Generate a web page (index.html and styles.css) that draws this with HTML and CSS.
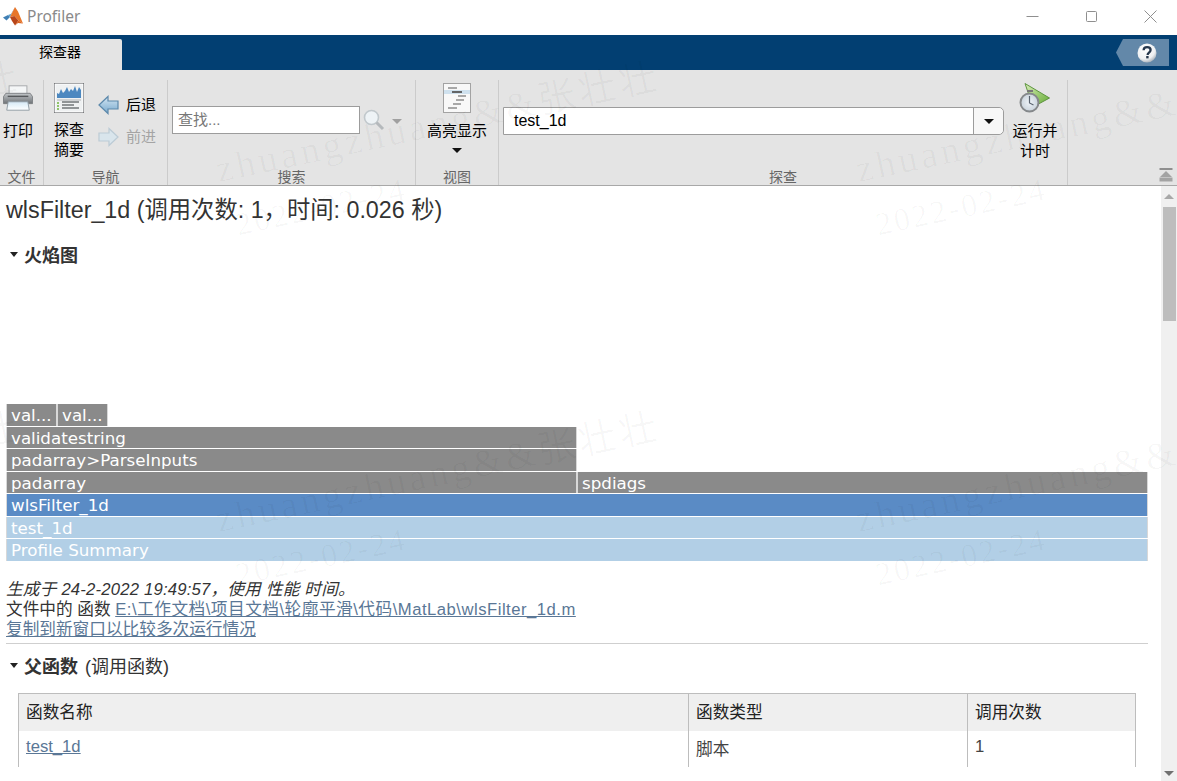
FILE: index.html
```html
<!DOCTYPE html>
<html lang="zh">
<head>
<meta charset="utf-8">
<title>Profiler</title>
<link rel="stylesheet" href="styles.css">
</head>
<body>
<div class="window">
  <header class="titlebar">
    <svg class="logo" width="20" height="20" viewBox="0 0 20 20">
      <polygon points="0,11.5 5,9 7,11 3.5,14.5" fill="#3f7fb5"/>
      <polygon points="5,9 8,8 12,1 7,11" fill="#5b9bc8"/>
      <polygon points="12,1 15,5.5 20,17.5 15.5,14.5 11.5,10 7,11 9.5,6" fill="#e8762a"/>
      <polygon points="7,11 11.5,10 15.5,14.5 12,19.5 9,15" fill="#b8461a"/>
      <polygon points="15.5,14.5 20,17.5 15,17 12,19.5" fill="#d9621f"/>
    </svg>
    <span class="app-name">Profiler</span>
    <div class="win-controls">
      <svg width="13" height="13" viewBox="0 0 13 13"><path d="M0.5 6.5H12.5" stroke="#8f8f8f" fill="none"/></svg>
      <svg width="13" height="13" viewBox="0 0 13 13"><rect x="1.5" y="1.5" width="10" height="10" rx="1" stroke="#8f8f8f" fill="none"/></svg>
      <svg width="13" height="13" viewBox="0 0 13 13"><path d="M0.5 0.5L12.5 12.5M12.5 0.5L0.5 12.5" stroke="#8f8f8f" fill="none"/></svg>
    </div>
  </header>

  <nav class="tabstrip">
    <div class="tab">探查器</div>
    <div class="help">
      <svg width="53" height="27" viewBox="0 0 53 27">
        <defs><radialGradient id="hg" cx="0.4" cy="0.3" r="0.8"><stop offset="0" stop-color="#fff"/><stop offset="0.65" stop-color="#eef0f2"/><stop offset="1" stop-color="#8d98a3"/></radialGradient></defs>
        <polygon points="7,0 53,0 53,27 7,27 0,13.5" fill="#6388a9"/>
        <circle cx="31" cy="14" r="9.5" fill="url(#hg)"/>
        <path d="M27.6 11.3c0-2 1.5-3.1 3.5-3.1s3.5 1.1 3.5 2.9c0 2.6-3 2.5-3 4.8" stroke="#27384d" stroke-width="2.3" fill="none"/>
        <rect x="30.2" y="17" width="2.4" height="2.4" fill="#27384d"/>
      </svg>
    </div>
  </nav>

  <section class="toolstrip">
    <div class="group g-file">
      <div class="group-body col-center">
        <svg class="ic-print" width="30" height="26" viewBox="0 0 32 27">
          <defs>
            <linearGradient id="pb" x1="0" y1="0" x2="0" y2="1"><stop offset="0" stop-color="#c2c6c9"/><stop offset="1" stop-color="#6e7276"/></linearGradient>
            <linearGradient id="pp" x1="0" y1="0" x2="0" y2="1"><stop offset="0" stop-color="#d5e9f6"/><stop offset="1" stop-color="#fff"/></linearGradient>
          </defs>
          <rect x="6.5" y="0.5" width="19" height="9" fill="#f4f6f7" stroke="#a5a8aa"/>
          <path d="M3 8.5H29L31.5 12V19.5H0.5V12Z" fill="url(#pb)" stroke="#7d8083"/>
          <rect x="5" y="11" width="22" height="1.5" fill="#55585b"/>
          <path d="M5.5 17.5H26.5L28 26.5H4Z" fill="url(#pp)" stroke="#8f9ba3"/>
        </svg>
        <span class="btn-text print-text">打印</span>
      </div>
      <div class="group-label">文件</div>
    </div>

    <div class="group g-nav">
      <div class="group-body nav-body">
        <div class="summary col-center">
          <svg width="30" height="30" viewBox="0 0 30 30">
            <rect x="0.5" y="0.5" width="29" height="29" fill="#eff1f2" stroke="#4c4f52"/>
            <rect x="1" y="1" width="28" height="28" fill="none" stroke="#fff"/>
            <path d="M3 15V10L5 11L7 6L9 10L11 8L13 4L15 9L17 6L19 8L21 3L23 9L25 4L27 7V15Z" fill="#4c88c0"/>
            <path d="M3 17H27" stroke="#b1b4b6"/>
            <path d="M8 19H25M8 22H20M8 25H25" stroke="#73777a" stroke-width="1.4"/>
            <path d="M4 19V27" stroke="#8fc46a" stroke-width="2" stroke-dasharray="2 1"/>
          </svg>
          <span class="btn-text summary-text">探查<br>摘要</span>
        </div>
        <div class="nav-arrows">
          <div class="nav-item">
            <svg width="21" height="20" viewBox="0 0 21 20">
              <defs><linearGradient id="ab" x1="0" y1="0" x2="0" y2="1"><stop offset="0" stop-color="#d4e6f3"/><stop offset="1" stop-color="#78a9cd"/></linearGradient></defs>
              <path d="M1 10L10 1.5V6H20V14H10V18.5Z" fill="url(#ab)" stroke="#5d89ab" stroke-width="1.2"/>
            </svg>
            <span class="btn-text">后退</span>
          </div>
          <div class="nav-item disabled">
            <svg width="21" height="20" viewBox="0 0 21 20">
              <path d="M20 10L11 1.5V6H1V14H11V18.5Z" fill="#d9e5ec" stroke="#bccbd5" stroke-width="1.2"/>
            </svg>
            <span class="btn-text">前进</span>
          </div>
        </div>
      </div>
      <div class="group-label">导航</div>
    </div>

    <div class="group g-search">
      <div class="group-body search-body">
        <div class="search-box">查找...</div>
        <svg class="ic-search" width="22" height="22" viewBox="0 0 22 22">
          <circle cx="8.5" cy="8.5" r="7" fill="#eef3f6" stroke="#c1c8cc" stroke-width="1.6"/>
          <path d="M13.5 13.5L20 20" stroke="#b5b9bc" stroke-width="3"/>
        </svg>
        <span class="caret caret-muted"></span>
      </div>
      <div class="group-label">搜索</div>
    </div>

    <div class="group g-view">
      <div class="group-body col-center">
        <svg class="ic-view" width="28" height="30" viewBox="0 0 28 30">
          <rect x="0.5" y="0.5" width="27" height="29" fill="#f8f8f8" stroke="#a3a3a3"/>
          <rect x="1" y="7" width="26" height="4" fill="#cfe1ee"/>
          <path d="M5 5H14M9 9H19M15 13H23M13 17H21M10 21H18M5 25H14" stroke="#8d8d8d" stroke-width="1.3"/>
          <path d="M9 9H19" stroke="#444" stroke-width="1.3"/>
        </svg>
        <span class="btn-text view-text">高亮显示</span>
        <span class="caret view-caret"></span>
      </div>
      <div class="group-label">视图</div>
    </div>

    <div class="group g-explore">
      <div class="group-body explore-body">
        <div class="combo">
          <div class="combo-value">test_1d</div>
          <div class="combo-btn"><span class="caret"></span></div>
        </div>
        <div class="run col-center">
          <svg width="32" height="31" viewBox="0 0 32 31">
            <defs>
              <linearGradient id="rg" x1="0" y1="0" x2="1" y2="1"><stop offset="0" stop-color="#d8eeb8"/><stop offset="1" stop-color="#5fa82e"/></linearGradient>
              <radialGradient id="rc" cx="0.5" cy="0.5" r="0.6"><stop offset="0" stop-color="#eef3f8"/><stop offset="1" stop-color="#c2ccd6"/></radialGradient>
            </defs>
            <path d="M6 0.5L30.5 15L14 24Z" fill="url(#rg)" stroke="#5e9440"/>
            <rect x="8" y="7" width="6" height="2" fill="#777"/>
            <circle cx="10.5" cy="19.5" r="9" fill="url(#rc)" stroke="#85888b" stroke-width="2"/>
            <path d="M10.5 13V20L14.5 22" stroke="#5a6470" stroke-width="1.2" fill="none"/>
          </svg>
          <span class="btn-text run-text">运行并<br>计时</span>
        </div>
      </div>
      <div class="group-label">探查</div>
    </div>

    <div class="strip-end">
      <svg width="14" height="14" viewBox="0 0 14 14">
        <rect x="0.5" y="0" width="13" height="2" fill="#8f8f8f"/>
        <polygon points="7,3 13,9 1,9" fill="#a3a3a3"/>
        <rect x="0.5" y="9.5" width="13" height="4" fill="#a3a3a3"/>
      </svg>
    </div>
  </section>

  <main class="main">
    <div class="content">
      <h1 class="page-title">wlsFilter_1d (调用次数: 1，时间: 0.026 秒)</h1>
      <h2 class="section-head flame-head"><span class="tri"></span>火焰图</h2>

      <div class="flame">
        <div class="frow">
          <div class="fbar grey f-small">val...</div>
          <div class="fbar grey f-small">val...</div>
        </div>
        <div class="frow">
          <div class="fbar grey f-half">validatestring</div>
        </div>
        <div class="frow">
          <div class="fbar grey f-half">padarray&gt;ParseInputs</div>
        </div>
        <div class="frow">
          <div class="fbar grey f-half">padarray</div>
          <div class="fbar grey f-half">spdiags</div>
        </div>
        <div class="frow">
          <div class="fbar blue f-full">wlsFilter_1d</div>
        </div>
        <div class="frow">
          <div class="fbar pale f-full">test_1d</div>
        </div>
        <div class="frow">
          <div class="fbar pale f-full">Profile Summary</div>
        </div>
      </div>

      <div class="meta">
        <div class="meta-line"><em class="stamp">生成于 24-2-2022 19:49:57，使用 性能 时间。</em></div>
        <div class="meta-line">文件中的 函数 <a class="link path-link" href="#">E:\工作文档\项目文档\轮廓平滑\代码\MatLab\wlsFilter_1d.m</a></div>
        <div class="meta-line"><a class="link" href="#">复制到新窗口以比较多次运行情况</a></div>
      </div>
      <hr class="rule">
      <h2 class="section-head parent-head"><span class="tri"></span>父函数 <span class="sub">(调用函数)</span></h2>

      <div class="table">
        <div class="th c1">函数名称</div>
        <div class="th c2">函数类型</div>
        <div class="th c3">调用次数</div>
        <div class="td c1"><a class="link" href="#">test_1d</a></div>
        <div class="td c2 type-cell">脚本</div>
        <div class="td c3">1</div>
      </div>
    </div>
    <div class="scrollbar">
      <span class="sb-arrow up"></span>
      <div class="sb-track"><div class="sb-thumb"></div></div>
      <span class="sb-arrow down"></span>
    </div>
  </main>

  <div class="watermarks" aria-hidden="true">
    <div class="wm-tile"><div class="wm"><span>zhuangzhuang&amp;&amp;张壮壮</span><span class="wm-date">2022-02-24</span></div></div>
    <div class="wm-tile"><div class="wm"><span>zhuangzhuang&amp;&amp;张壮壮</span><span class="wm-date">2022-02-24</span></div></div>
    <div class="wm-tile"><div class="wm"><span>zhuangzhuang&amp;&amp;张壮壮</span><span class="wm-date">2022-02-24</span></div></div>
    <div class="wm-tile"><div class="wm"><span>zhuangzhuang&amp;&amp;张壮壮</span><span class="wm-date">2022-02-24</span></div></div>
    <div class="wm-tile"><div class="wm"><span>zhuangzhuang&amp;&amp;张壮壮</span><span class="wm-date">2022-02-24</span></div></div>
    <div class="wm-tile"><div class="wm"><span>zhuangzhuang&amp;&amp;张壮壮</span><span class="wm-date">2022-02-24</span></div></div>
  </div>
</div>
</body>
</html>
```

FILE: styles.css
```css
* { box-sizing: border-box; }
html, body { margin: 0; padding: 0; height: 100%; overflow: hidden; background: #fff; }
body { font-family: "Liberation Sans", "Noto Sans CJK SC", sans-serif; color: #333; }

.window { position: relative; width: 1177px; height: 781px; display: flex; flex-direction: column; overflow: hidden; }

/* title bar */
.titlebar { height: 35px; flex: none; display: flex; align-items: center; padding: 0 0 3px 3px; background: #fff; }
.logo { margin-right: 4px; }
.app-name { font-family: "Noto Sans", sans-serif; font-size: 15.5px; color: #8a8a8a; }
.win-controls { margin-left: auto; display: flex; gap: 46px; padding-right: 20px; }

/* tabs */
.tabstrip { height: 35px; flex: none; background: #023f72; display: flex; align-items: flex-end; }
.tab { width: 122px; height: 31px; background: #e4e4e4; border-top-right-radius: 2px; font-size: 14px; line-height: 27px; text-align: center; color: #000; padding-right: 2px; }
.help { margin-left: auto; margin-right: 8px; margin-bottom: 4px; height: 27px; }
.help svg { display: block; }

/* toolstrip */
.toolstrip { height: 116px; flex: none; background: #e4e4e4; border-bottom: 1px solid #a8a8a8; display: flex; padding-top: 10px; }
.group { flex: none; display: flex; flex-direction: column; border-right: 1px solid #cbcbcb; }
.group-body { flex: 1; min-height: 0; }
.group-label { height: 17px; font-size: 14px; line-height: 18px; text-align: center; color: #666; }
.col-center { display: flex; flex-direction: column; align-items: center; }
.btn-text { font-size: 15px; line-height: 20px; color: #000; text-align: center; }
.g-file { width: 44px; }
.g-nav { width: 124px; }
.g-search { width: 248px; }
.g-view { width: 83px; }
.g-explore { width: 569px; }
.ic-print { margin-top: 5px; }
.print-text { margin-top: 10px; }
.g-file .group-body { padding-right: 7px; }

.nav-body { display: flex; padding: 3px 0 0 10px; }
.summary { width: 30px; }
.summary-text { margin-top: 7px; }
.nav-arrows { margin-left: 14px; padding-top: 12px; display: flex; flex-direction: column; gap: 12px; }
.nav-item { display: flex; align-items: center; gap: 7px; height: 20px; }
.nav-item.disabled .btn-text { color: #a4a4a4; }

.search-body { display: flex; align-items: flex-start; padding: 26px 0 0 4px; }
.search-box { width: 188px; height: 28px; background: #fff; border: 1px solid #9c9c9c; font-size: 15px; line-height: 26px; padding-left: 5px; color: #777; }
.ic-search { margin: 3px 0 0 3px; }
.caret { display: inline-block; width: 0; height: 0; border-left: 5px solid transparent; border-right: 5px solid transparent; border-top: 5px solid #111; }
.caret-muted { border-top-color: #a0a0a0; margin: 13px 0 0 7px; }

.ic-view { margin-top: 3px; }
.view-text { margin-top: 8px; }
.view-caret { margin-top: 7px; }

.explore-body { display: flex; padding: 3px 0 0 4px; }
.combo { width: 501px; height: 28px; margin-top: 24px; display: flex; background: #fff; border: 1px solid #9c9c9c; border-radius: 0 5px 5px 0; }
.combo-value { flex: 1; font-size: 16px; line-height: 25px; padding-left: 10px; color: #000; }
.combo-btn { width: 30px; border-left: 1px solid #9c9c9c; background: #f7f7f7; border-radius: 0 5px 5px 0; display: flex; align-items: center; justify-content: center; }
.run { width: 62px; margin-left: 0; }
.run-text { margin-top: 7px; }

.strip-end { flex: 1; display: flex; justify-content: flex-end; align-items: flex-end; padding: 0 4px 3px 0; }
.strip-end svg { display: block; }

/* main */
.main { flex: 1; min-height: 0; display: flex; background: #fff; }
.content { flex: 1; min-width: 0; padding: 0 13px 0 5px; overflow: hidden; }
.page-title { margin: 11px 0 0 1px; font-size: 23.3px; font-weight: 400; line-height: 26px; color: #333; white-space: nowrap; }
.section-head { margin: 0; font-size: 18px; line-height: 24px; font-weight: 700; color: #333; display: flex; align-items: center; white-space: pre; }
.flame-head { margin-top: 21px; }
.tri { width: 0; height: 0; margin: 0 6px 3px 5px; border-left: 4.5px solid transparent; border-right: 4.5px solid transparent; border-top: 5px solid #222; }
.sub { font-weight: 400; margin-left: 2px; }

.flame { margin-top: 136px; margin-left: 1px; width: 1142px; display: flex; flex-direction: column; gap: 1px; }
.frow { height: 21.5px; display: flex; }
.fbar { height: 100%; font-family: "DejaVu Sans", sans-serif; font-size: 16.7px; line-height: 22px; color: #fff; padding-left: 4px; white-space: nowrap; overflow: hidden; border: 1px solid #d8d8d8; border-width: 0 1px; }
.grey { background: #8a8a8a; }
.blue { background: #5a8bc5; }
.pale { background: #b2cfe6; }
.f-small { width: 51px; }
.f-half { width: 571px; }
.f-full { width: 1142px; }

.meta { margin-top: 19px; margin-left: 1px; font-size: 16.67px; line-height: 20px; color: #333; }
.meta-line { white-space: nowrap; }
.stamp { letter-spacing: 0.2px; }
.link { color: #5a7796; text-decoration: underline; }
.path-link { letter-spacing: 0.5px; }
.rule { margin: 3px 0 0 1px; width: 1142px; border: 0; border-top: 1px solid #cfcfcf; }
.parent-head { margin-top: 11px; }

.table { margin: 14px 0 0 13px; width: 1118px; display: grid; grid-template-columns: 669px 279px 168px; grid-template-rows: 37px 36px; border: 1px solid #bdbdbd; border-width: 1px 1px 0; font-size: 16.67px; }
.th { background: #efefef; color: #222; line-height: 37px; padding-left: 7px; }
.td { padding: 6px 0 0 7px; line-height: 20px; color: #444; }
.c2, .c3 { border-left: 1px solid #bdbdbd; }
.type-cell { padding-top: 9px; }

.scrollbar { width: 16px; flex: none; background: #f0f0f0; display: flex; flex-direction: column; align-items: center; }
.sb-arrow { flex: none; width: 0; height: 0; border-left: 5px solid transparent; border-right: 5px solid transparent; }
.sb-arrow.up { margin-top: 8px; border-bottom: 5px solid #a8a8a8; }
.sb-arrow.down { margin-bottom: 5px; border-top: 5px solid #707070; }
.sb-track { flex: 1; width: 100%; padding: 8px 1px 0 2px; }
.sb-thumb { height: 114px; background: #bdbdbd; }

/* watermark overlay */
.watermarks { position: absolute; left: -420px; top: 70px; display: grid; grid-template-columns: repeat(3, 640px); grid-auto-rows: 350px; pointer-events: none; }
.wm-tile { position: relative; }
.wm { position: absolute; left: 2px; top: 78px; width: 460px; transform: rotate(-12deg); transform-origin: left center; display: flex; flex-direction: column; font-family: "Liberation Serif", "Noto Sans CJK SC", serif; font-size: 38px; line-height: 42px; color: rgba(0, 0, 0, 0.03); white-space: nowrap; letter-spacing: 3.6px; }
.wm-date { margin-top: 16px; margin-left: 8px; font-size: 32px; letter-spacing: 2.5px; }
```
